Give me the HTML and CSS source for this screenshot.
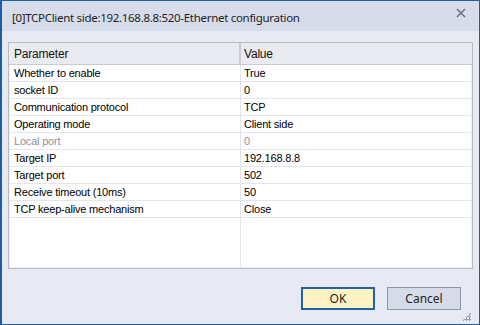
FILE: index.html
```html
<!DOCTYPE html>
<html lang="en">
<head>
    <meta charset="UTF-8">
    <title>Ethernet configuration</title>
    <link rel="stylesheet" href="styles.css">
</head>
<body>
    <div class="window">
        <!-- Title bar -->
        <div class="titlebar">
            <span class="title">[0]TCPClient side:192.168.8.8:520-Ethernet configuration</span>
            <svg class="close" width="10" height="10" viewBox="0 0 10 10">
                <path d="M1 1L9 9M9 1L1 9" stroke="#6f7179" stroke-width="1.6" fill="none"/>
            </svg>
        </div>

        <div class="content">
            <!-- Property grid -->
            <div class="grid">
                <div class="head">Parameter</div>
                <div class="head head-last">Value</div>

                <div class="cell">Whether to enable</div>
                <div class="cell val">True</div>
                <div class="cell">socket ID</div>
                <div class="cell val">0</div>
                <div class="cell">Communication protocol</div>
                <div class="cell val">TCP</div>
                <div class="cell">Operating mode</div>
                <div class="cell val">Client side</div>
                <div class="cell disabled">Local port</div>
                <div class="cell val disabled">0</div>
                <div class="cell">Target IP</div>
                <div class="cell val">192.168.8.8</div>
                <div class="cell">Target port</div>
                <div class="cell val">502</div>
                <div class="cell">Receive timeout (10ms)</div>
                <div class="cell val">50</div>
                <div class="cell">TCP keep-alive mechanism</div>
                <div class="cell val">Close</div>

                <div class="filler"></div>
                <div class="filler val"></div>
            </div>

            <div class="buttons">
                <button class="btn btn-ok">OK</button>
                <button class="btn btn-cancel">Cancel</button>
                <span class="grip"></span>
            </div>
        </div>
    </div>
</body>
</html>
```

FILE: styles.css
```css
/* Dialog styles */
* {
    margin: 0;
    padding: 0;
    box-sizing: border-box;
}

body {
    width: 480px;
    height: 325px;
    overflow: hidden;
    background: #e7eaf3;
}

.window {
    width: 480px;
    height: 325px;
    display: flex;
    flex-direction: column;
    border: 1px solid #1b5ea6;
    border-left-width: 2px;
    background: #e7eaf3;
}

.titlebar {
    height: 30px;
    flex-shrink: 0;
    display: flex;
    align-items: center;
    justify-content: space-between;
    background: #d7dcea;
    padding: 2px 0 0 10px;
    font-family: "Noto Sans", sans-serif;
    font-size: 11.5px;
    letter-spacing: -0.3px;
    color: #1e1e1e;
}

.close {
    margin: -9px 13px 0 0;
}

.content {
    flex: 1;
    display: flex;
    flex-direction: column;
    padding: 11px 6px 0 6px;
}

.grid {
    height: 227px;
    display: grid;
    grid-template-columns: 232px 1fr;
    grid-template-rows: 22px repeat(9, 17px) 1fr;
    background: #fff;
    border: 1px solid #b7bbc6;
    box-shadow: inset 0 0 0 1px #eef0f5;
    font-family: "Liberation Sans", Arial, sans-serif;
    font-size: 11px;
    letter-spacing: -0.2px;
    color: #000;
}

.head {
    background: #e9ebf1;
    border-bottom: 1px solid #c9ccd5;
    border-right: 2px solid #c9ccd5;
    padding: 4px 0 0 5px;
    font-size: 12px;
    color: #111;
}

.head-last {
    border-right: none;
    padding-left: 3px;
}

.cell {
    border-bottom: 1px solid #e2e5ed;
    border-right: 1px solid #e2e5ed;
    padding: 2px 0 0 5px;
    white-space: nowrap;
}

.val {
    border-right: none;
    padding-left: 3px;
}

.filler {
    border-right: 1px solid #e2e5ed;
}

.filler.val {
    border-right: none;
}

.disabled {
    color: #8d929c;
}

.buttons {
    display: flex;
    justify-content: flex-end;
    align-items: flex-start;
    gap: 12px;
    padding: 18px 12px 0 0;
    position: relative;
    flex: 1;
}

.btn {
    width: 74px;
    height: 23px;
    font-family: "Noto Sans", sans-serif;
    font-size: 12px;
    color: #1e1e1e;
}

.btn-ok {
    background: #fff3c4;
    border: 2px solid #2161a8;
}

.btn-cancel {
    background: #d6dbe9;
    border: 1px solid #8d94a6;
}

/* resize grip dots */
.grip {
    position: absolute;
    right: 2px;
    bottom: 3px;
    width: 9px;
    height: 9px;
    background-image: radial-gradient(circle, #9a9fab 1px, transparent 1.2px);
    background-size: 3px 3px;
    clip-path: polygon(100% 0, 100% 100%, 0 100%);
}
```
